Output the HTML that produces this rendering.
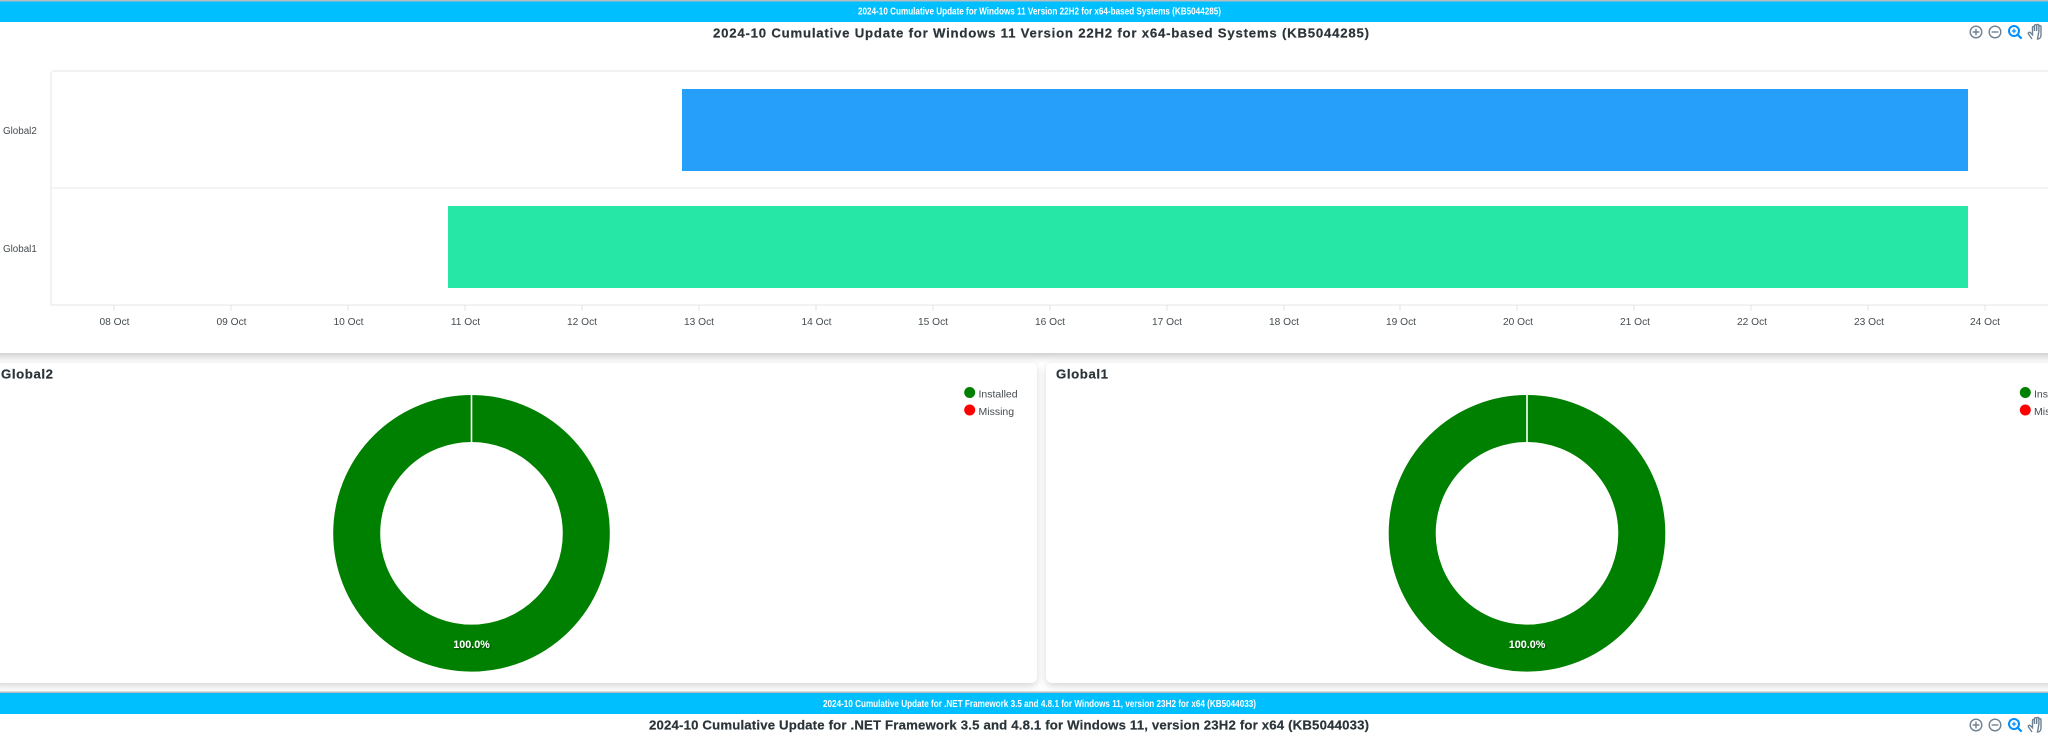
<!DOCTYPE html>
<html><head><meta charset="utf-8"><style>
html,body{margin:0;padding:0;width:2048px;height:737px;overflow:hidden;background:#fff}
svg{display:block;position:absolute;left:0;top:0;filter:blur(0.35px)}
text{font-family:"Liberation Sans",Arial,sans-serif}
.t{font-size:13.2px;font-weight:700;fill:#2b3438;stroke:#2b3438;stroke-width:0.2px;text-anchor:start}
.b{font-size:10px;font-weight:700;fill:#fff}
.x{font-size:10.2px;fill:#454c50;text-anchor:middle}
.y{font-size:9.800px;fill:#454c50}
.l{font-size:10.500px;fill:#454c50}
.p{font-size:10.800px;font-weight:700;fill:#fff;text-anchor:middle;filter:url(#ts)}
.i{fill:none;stroke:#6e8192;stroke-width:1.4}
</style></head><body>
<svg width="2048" height="737" viewBox="0 0 2048 737" xmlns="http://www.w3.org/2000/svg">
<defs>
<filter id="s1" x="-5%" y="-10%" width="110%" height="120%"><feGaussianBlur stdDeviation="4"/></filter>
<filter id="ts" x="-20%" y="-40%" width="140%" height="180%"><feDropShadow dx="1" dy="1" stdDeviation="0.8" flood-color="#000" flood-opacity="0.45"/></filter>
<g id="tools">
<circle class="i" cx="1976" cy="0" r="5.800"/><path class="i" d="M1972.600 0h6.800M1976-3.400v6.800"/>
<circle class="i" cx="1995" cy="0" r="5.800"/><path class="i" d="M1991.600 0h6.800"/>
<circle cx="2014" cy="-1" r="5" fill="none" stroke="#008ffb" stroke-width="2"/><path d="M2017.600 2.600l4 4" stroke="#008ffb" stroke-width="2.200" fill="none"/><path d="M2011.800-1h4.400M2014-3.200v4.400" stroke="#008ffb" stroke-width="1.200" fill="none"/>
<path class="i" transform="translate(3 0)" d="M2029 7l-3.500-5c-.8-1.400 1-2.400 2-1.200l2 2V-4.500c0-1.400 2-1.400 2 0V-1M2031.500-1V-6.300c0-1.400 2.200-1.400 2.200 0V-1M2033.700-1V-6.500c0-1.400 2.200-1.400 2.200 0V-1M2035.900-1V-5.300c0-1.400 2.100-1.400 2.100 0V3c0 2.500-1.500 4-3.500 4z"/>
</g>
</defs>

<!-- backdrop shadows -->
<rect x="-10" y="4" width="2070" height="353" fill="#000" opacity="0.2" filter="url(#s1)"/>
<rect x="-10" y="366" width="1047" height="320" rx="6" fill="#000" opacity="0.16" filter="url(#s1)"/>
<rect x="1046" y="366" width="1020" height="320" rx="6" fill="#000" opacity="0.16" filter="url(#s1)"/>

<!-- top section -->
<rect x="0" y="0" width="2048" height="353" fill="#fff"/>
<rect x="0" y="0" width="2048" height="1.500" fill="#b8bcbf"/>
<rect x="0" y="1.500" width="2048" height="20.500" fill="#00bfff"/>
<text class="b" x="858" y="14.500" textLength="363" lengthAdjust="spacingAndGlyphs">2024-10 Cumulative Update for Windows 11 Version 22H2 for x64-based Systems (KB5044285)</text>
<text class="t" x="713" y="37.500" textLength="656" lengthAdjust="spacing">2024-10 Cumulative Update for Windows 11 Version 22H2 for x64-based Systems (KB5044285)</text>
<use href="#tools" y="32"/>

<!-- timeline plot -->
<path d="M2048 71H54a3 3 0 0 0-3 3V305H2048" fill="none" stroke="#eceeef" stroke-width="1.500"/>
<path d="M51 188H2048" stroke="#eceeef" stroke-width="1.200"/>
<rect x="682" y="89" width="1286" height="82" fill="#269ffb"/>
<rect x="448" y="206" width="1520" height="82" fill="#26e7a6"/>
<text class="y" x="3" y="134">Global2</text>
<text class="y" x="3" y="252">Global1</text>
<g stroke="#e3e5e6" stroke-width="1">
<path d="M114 305v6M231 305v6M348 305v6M465 305v6M582 305v6M699 305v6M816 305v6M933 305v6M1050 305v6M1167 305v6M1284 305v6M1400 305v6M1517 305v6M1634 305v6M1751 305v6M1868 305v6M1985 305v6"/>
</g>
<g>
<text class="x" x="114.500" y="325">08 Oct</text><text class="x" x="231.500" y="325">09 Oct</text>
<text class="x" x="348.500" y="325">10 Oct</text><text class="x" x="465.500" y="325">11 Oct</text>
<text class="x" x="582" y="325">12 Oct</text><text class="x" x="699" y="325">13 Oct</text>
<text class="x" x="816.500" y="325">14 Oct</text><text class="x" x="933" y="325">15 Oct</text>
<text class="x" x="1050" y="325">16 Oct</text><text class="x" x="1167" y="325">17 Oct</text>
<text class="x" x="1284" y="325">18 Oct</text><text class="x" x="1401" y="325">19 Oct</text>
<text class="x" x="1518" y="325">20 Oct</text><text class="x" x="1635" y="325">21 Oct</text>
<text class="x" x="1752" y="325">22 Oct</text><text class="x" x="1869" y="325">23 Oct</text>
<text class="x" x="1985" y="325">24 Oct</text>
</g>

<!-- cards -->
<rect x="-10" y="363" width="1047" height="320" rx="6" fill="#fff"/>
<rect x="1046" y="363" width="1020" height="320" rx="6" fill="#fff"/>
<text class="t" x="1" y="378.500" textLength="52" lengthAdjust="spacing">Global2</text>
<text class="t" x="1056" y="378.500" textLength="52" lengthAdjust="spacing">Global1</text>

<circle cx="471.500" cy="533.300" r="114.800" fill="none" stroke="#008000" stroke-width="47"/>
<path d="M471.500 394v48" stroke="#fff" stroke-width="1.600"/>
<text class="p" x="471.500" y="648">100.0%</text>
<circle cx="969.700" cy="392.500" r="5.500" fill="#008000"/>
<circle cx="969.700" cy="410" r="5.500" fill="#ff0000"/>
<text class="l" x="978.500" y="397.500">Installed</text>
<text class="l" x="978.500" y="415">Missing</text>

<circle cx="1527" cy="533.300" r="114.800" fill="none" stroke="#008000" stroke-width="47"/>
<path d="M1527 394v48" stroke="#fff" stroke-width="1.600"/>
<text class="p" x="1527" y="648">100.0%</text>
<circle cx="2025.300" cy="392.500" r="5.500" fill="#008000"/>
<circle cx="2025.300" cy="410" r="5.500" fill="#ff0000"/>
<text class="l" x="2034" y="397.500">Installed</text>
<text class="l" x="2034" y="415">Missing</text>

<!-- second section -->
<rect x="0" y="692" width="2048" height="45" fill="#fff"/>
<rect x="0" y="691.500" width="2048" height="1.500" fill="#b8bcbf"/>
<rect x="0" y="693" width="2048" height="21" fill="#00bfff"/>
<text class="b" x="823" y="707" textLength="433" lengthAdjust="spacingAndGlyphs">2024-10 Cumulative Update for .NET Framework 3.5 and 4.8.1 for Windows 11, version 23H2 for x64 (KB5044033)</text>
<text class="t" x="649" y="729.500" textLength="720" lengthAdjust="spacing">2024-10 Cumulative Update for .NET Framework 3.5 and 4.8.1 for Windows 11, version 23H2 for x64 (KB5044033)</text>
<use href="#tools" y="725"/>
</svg>
</body></html>
